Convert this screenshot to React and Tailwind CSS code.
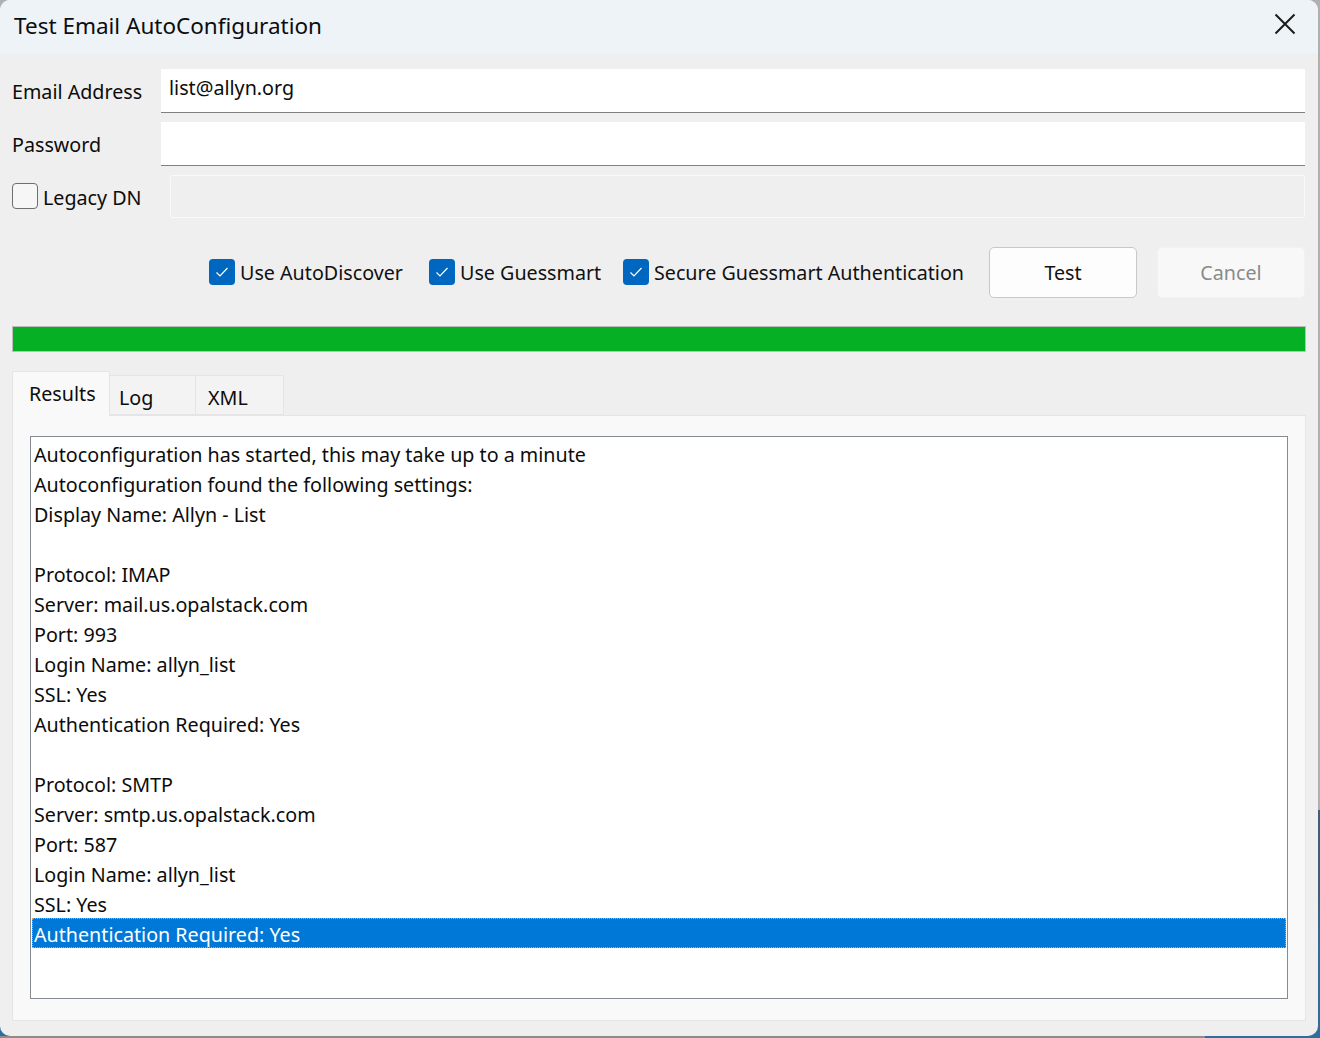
const lines = [
  "Autoconfiguration has started, this may take up to a minute",
  "Autoconfiguration found the following settings:",
  "Display Name: Allyn - List",
  "",
  "Protocol: IMAP",
  "Server: mail.us.opalstack.com",
  "Port: 993",
  "Login Name: allyn_list",
  "SSL: Yes",
  "Authentication Required: Yes",
  "",
  "Protocol: SMTP",
  "Server: smtp.us.opalstack.com",
  "Port: 587",
  "Login Name: allyn_list",
  "SSL: Yes",
  "Authentication Required: Yes",
];

function Check({ label, width }) {
  return (
    <div className={"flex shrink-0 items-center gap-[5px] " + width}>
      <span className="flex h-[26px] w-[26px] shrink-0 items-center justify-center rounded-[4px] bg-[#0067c0]">
        <svg width="14" height="14" viewBox="0 0 14 14" fill="none" stroke="#fff" strokeWidth="1.2">
          <path d="M1.5 7.5 L5 11 L12.5 3" />
        </svg>
      </span>
      <span className="whitespace-nowrap text-[#111]">{label}</span>
    </div>
  );
}

export default function App() {
  return (
    <div
      className="h-[1038px] w-[1320px] overflow-hidden bg-[linear-gradient(to_bottom,#b0b0b0_0,#b0b0b0_810px,#3f5f78_810px,#3f5f78_890px,#2f6d9c_950px,#2f6d9c_100%)] text-[19.7px] text-[#0c0c0c]"
      style={{ fontFamily: '"Noto Sans", "Open Sans", sans-serif' }}
    >
      <div className="flex h-[1036px] w-[1318px] flex-col overflow-hidden rounded-[10px] bg-[#efefef]">
        <div className="flex h-[53px] shrink-0 items-center justify-between bg-[#eef3f8] pl-[14px] pr-[22px]">
          <span className="mb-[1px] text-[22.5px] leading-none">Test Email AutoConfiguration</span>
          <svg className="mb-[5px]" width="22" height="22" viewBox="0 0 22 22" stroke="#1a1a1a" strokeWidth="2" fill="none">
            <path d="M1.5 1.5 L20.5 20.5 M20.5 1.5 L1.5 20.5" />
          </svg>
        </div>

        <div className="flex flex-col px-[12px] pt-[16px]">
          <div className="flex h-[44px] items-center">
            <span className="w-[149px] shrink-0 pt-[1px]">Email Address</span>
            <div className="mr-[1px] h-full flex-1 border-b-[1.5px] border-[#808080] bg-white pl-[8px] pt-[4px] leading-[30px]">list@allyn.org</div>
          </div>
          <div className="mt-[9px] flex h-[44px] items-center">
            <span className="w-[149px] shrink-0 pt-[2px]">Password</span>
            <div className="mr-[1px] h-full flex-1 border-b-[1.5px] border-[#808080] bg-white" />
          </div>
          <div className="mt-[9px] flex h-[43px] items-center">
            <div className="flex w-[158px] shrink-0 items-center gap-[5px]">
              <span className="h-[26px] w-[26px] rounded-[4px] border-[1.5px] border-[#6e6e6e] bg-[#f6f6f6]" />
              <span className="pt-[2px]">Legacy DN</span>
            </div>
            <div className="mr-[1px] h-full flex-1 rounded-[2px] border border-[#f9f9f9] bg-[#efefef]" />
          </div>

          <div className="mt-[29px] flex h-[51px] items-center pl-[197px] pr-[1px]">
            <Check label="Use AutoDiscover" width="w-[220px]" />
            <Check label="Use Guessmart" width="w-[194px]" />
            <Check label="Secure Guessmart Authentication" width="w-[366px]" />
            <button className="h-full w-[148px] shrink-0 rounded-[5px] border border-[#c8c8c8] bg-[#fdfdfd] text-[#111]">Test</button>
            <button className="ml-[20px] h-full w-[148px] shrink-0 rounded-[5px] border border-[#f2f2f2] bg-[#f8f8f8] text-[#8a8a8a]">Cancel</button>
          </div>

          <div className="mt-[28px] h-[26px] border border-[#bcbcbc] bg-[#06b025]" />

          <div className="mt-[19px] flex h-[44px] items-end">
            <div className="z-10 -mb-px flex h-[45px] w-[98px] items-center border border-b-0 border-[#e5e5e5] bg-[#f9f9f9] pl-[16px]">Results</div>
            <div className="flex h-[40px] w-[86px] items-center border-y border-r border-[#e5e5e5] bg-[#f3f3f3] pl-[9px] pt-[5px]">Log</div>
            <div className="flex h-[40px] w-[88px] items-center border-y border-r border-[#e5e5e5] bg-[#f3f3f3] pl-[12px] pt-[5px]">XML</div>
          </div>
          <div className="h-[606px] border border-[#e5e5e5] bg-[#f9f9f9] px-[17px] pb-[21px] pt-[20px]">
            <div className="h-full border border-[#868a91] bg-white px-px pt-[3px]">
              {lines.map((t, i) => (
                <div
                  key={i}
                  className={
                    i === lines.length - 1
                      ? "-mt-[2px] h-[30px] whitespace-pre border border-dotted border-[#f0a040] bg-[#0078d7] pl-[1px] leading-[32px] text-white"
                      : "h-[30px] whitespace-pre pl-[2px] leading-[30px]"
                  }
                >
                  {t}
                </div>
              ))}
            </div>
          </div>
        </div>
      </div>
      <div className="h-[2px] w-[1205px] bg-[#8c8c8c]" />
    </div>
  );
}
